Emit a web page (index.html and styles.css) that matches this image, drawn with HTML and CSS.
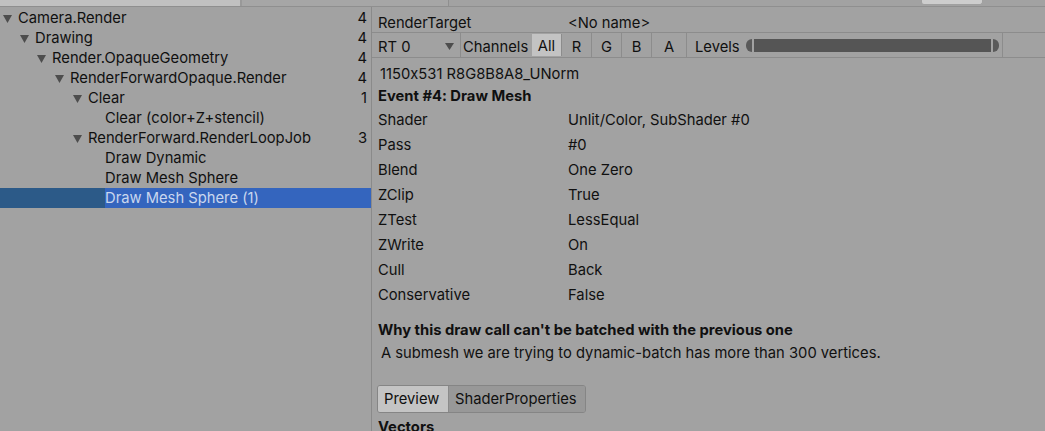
FILE: index.html
```html
<!DOCTYPE html>
<html>
<head>
<meta charset="utf-8">
<link rel="stylesheet" href="styles.css">
</head>
<body>
<div class="topstrip">
  <div class="ts-tab ts-active"></div>
  <div class="ts-tab ts-second"></div>
  <div class="ts-fill"><div class="ts-btn"></div></div>
</div>
<div class="main">
  <div class="tree">
    <div class="row lvl0"><span class="arrow"><svg width="9" height="8" viewBox="0 0 9 8"><polygon points="0,0 9,0 4.5,8" /></svg></span><span class="label">Camera.Render</span><span class="count">4</span></div>
    <div class="row lvl1"><span class="arrow"><svg width="9" height="8" viewBox="0 0 9 8"><polygon points="0,0 9,0 4.5,8" /></svg></span><span class="label">Drawing</span><span class="count">4</span></div>
    <div class="row lvl2"><span class="arrow"><svg width="9" height="8" viewBox="0 0 9 8"><polygon points="0,0 9,0 4.5,8" /></svg></span><span class="label">Render.OpaqueGeometry</span><span class="count">4</span></div>
    <div class="row lvl3"><span class="arrow"><svg width="9" height="8" viewBox="0 0 9 8"><polygon points="0,0 9,0 4.5,8" /></svg></span><span class="label">RenderForwardOpaque.Render</span><span class="count">4</span></div>
    <div class="row lvl4"><span class="arrow"><svg width="9" height="8" viewBox="0 0 9 8"><polygon points="0,0 9,0 4.5,8" /></svg></span><span class="label">Clear</span><span class="count">1</span></div>
    <div class="row lvl5"><span class="arrow"></span><span class="label">Clear (color+Z+stencil)</span></div>
    <div class="row lvl4"><span class="arrow"><svg width="9" height="8" viewBox="0 0 9 8"><polygon points="0,0 9,0 4.5,8" /></svg></span><span class="label">RenderForward.RenderLoopJob</span><span class="count">3</span></div>
    <div class="row lvl5"><span class="arrow"></span><span class="label">Draw Dynamic</span></div>
    <div class="row lvl5"><span class="arrow"></span><span class="label">Draw Mesh Sphere</span></div>
    <div class="row lvl5 selected"><span class="arrow"></span><span class="label">Draw Mesh Sphere (1)</span></div>
  </div>
  <div class="inspector">
    <div class="rt-row">
      <span class="rt-label">RenderTarget</span>
      <span class="rt-value">&lt;No name&gt;</span>
    </div>
    <div class="toolbar">
      <div class="tb-item tb-popup"><span>RT 0</span><svg width="9" height="7" viewBox="0 0 9 7"><polygon points="0,0 9,0 4.5,7" /></svg></div>
      <div class="tb-item tb-label">Channels</div>
      <div class="tb-item tb-btn tb-on">All</div>
      <div class="tb-item tb-btn">R</div>
      <div class="tb-item tb-btn">G</div>
      <div class="tb-item tb-btn">B</div>
      <div class="tb-item tb-btn tb-a">A</div>
      <div class="tb-item tb-levels">
        <span>Levels</span>
        <div class="slider"><span class="knob knob-l"></span><span class="bar"></span><span class="knob knob-r"></span></div>
      </div>
      <div class="tb-rest"></div>
    </div>
    <div class="details">
      <div class="line fmt">1150x531 R8G8B8A8_UNorm</div>
      <div class="line bold event">Event #4: Draw Mesh</div>
      <div class="props">
        <div class="prop"><span class="pk">Shader</span><span class="pv">Unlit/Color, SubShader #0</span></div>
        <div class="prop"><span class="pk">Pass</span><span class="pv">#0</span></div>
        <div class="prop"><span class="pk">Blend</span><span class="pv">One Zero</span></div>
        <div class="prop"><span class="pk">ZClip</span><span class="pv">True</span></div>
        <div class="prop"><span class="pk">ZTest</span><span class="pv">LessEqual</span></div>
        <div class="prop"><span class="pk">ZWrite</span><span class="pv">On</span></div>
        <div class="prop"><span class="pk">Cull</span><span class="pv">Back</span></div>
        <div class="prop"><span class="pk">Conservative</span><span class="pv">False</span></div>
      </div>
      <div class="line bold why">Why this draw call can't be batched with the previous one</div>
      <div class="line reason">A submesh we are trying to dynamic-batch has more than 300 vertices.</div>
      <div class="tabs">
        <div class="tab tab-on">Preview</div>
        <div class="tab tab-off">ShaderProperties</div>
      </div>
      <div class="line bold vectors">Vectors</div>
    </div>
  </div>
</div>
</body>
</html>
```

FILE: styles.css
```css
html, body {
  margin: 0;
  padding: 0;
  height: 100%;
  overflow: hidden;
}
body {
  background: #a2a2a2;
  color: #101010;
  font-family: Inter, "Noto Sans", sans-serif;
  font-size: 14.75px;
  line-height: 20px;
  font-feature-settings: "calt" 0;
}
.topstrip {
  height: 6px;
  display: flex;
  border-bottom: 1px solid #8f8f8f;
}
.ts-tab {
  height: 6px;
}
.ts-active {
  width: 240px;
  background: #c1c1c1;
  border-right: 2px solid #999;
}
.ts-second {
  width: 206px;
  background: #a6a6a6;
  border-right: 1px solid #8f8f8f;
}
.ts-fill {
  flex: 1;
  display: flex;
  justify-content: flex-end;
}
.ts-btn {
  width: 60px;
  height: 4px;
  background: #cdcdcd;
  border-radius: 0 0 3px 3px;
  border: 1px solid #a0a0a0;
  border-top: none;
  margin-right: 62px;
}
.main {
  display: flex;
  height: calc(100% - 7px);
}
.tree {
  width: 372px;
  flex: none;
  border-right: 1px solid #8a8a8a;
  padding-top: 1px;
  box-sizing: border-box;
}
.row {
  display: flex;
  height: 20px;
  align-items: center;
  padding-right: 4px;
}
.arrow {
  width: 15px;
  flex: none;
  display: flex;
  align-items: center;
}
.arrow svg {
  fill: #4d4d4d;
  margin-top: 1px;
}
.label {
  flex: 1;
  white-space: nowrap;
}
.count {
  flex: none;
}
.lvl0 { padding-left: 3px; }
.lvl1 { padding-left: 20px; }
.lvl2 { padding-left: 37px; }
.lvl3 { padding-left: 55px; }
.lvl4 { padding-left: 73px; }
.lvl5 { padding-left: 90px; }
.selected {
  background: #2c5a88;
  padding-right: 0;
}
.selected .label {
  background: #3465be;
  color: #c9d7ee;
  align-self: stretch;
  line-height: 20px;
}
.inspector {
  flex: 1;
  display: flex;
  flex-direction: column;
  min-width: 0;
}
.rt-row {
  height: 26px;
  border-bottom: 1px solid #8c8c8c;
  display: flex;
  padding-left: 6px;
  padding-top: 6px;
  box-sizing: border-box;
}
.rt-label {
  width: 190px;
}
.toolbar {
  height: 27px;
  border-bottom: 1px solid #8c8c8c;
  display: flex;
  box-sizing: border-box;
}
.tb-item {
  display: flex;
  align-items: center;
  border-right: 1px solid #8c8c8c;
  box-sizing: border-box;
  padding-top: 4px;
}
.tb-popup {
  width: 89px;
  padding-left: 6px;
  padding-right: 6px;
  justify-content: space-between;
}
.tb-popup svg {
  fill: #4d4d4d;
  margin-top: -2px;
}
.tb-label {
  width: 71px;
  padding-left: 2px;
  border-right: none;
}
.tb-btn {
  width: 30px;
  justify-content: center;
}
.tb-on {
  background: #c3c3c3;
  border-right: 1px solid #8c8c8c;
  margin: 1px 0;
  padding-top: 2px;
}
.tb-a {
  width: 35px;
}
.tb-levels {
  width: 316px;
  padding-left: 8px;
  padding-right: 3px;
}
.slider {
  display: flex;
  align-items: center;
  flex: 1;
  margin-left: 6px;
  margin-top: -4px;
  height: 13px;
}
.knob {
  width: 6px;
  height: 13px;
  background: #5a5a5a;
  flex: none;
}
.knob-l {
  border-radius: 6px 0 0 6px;
  margin-right: 2px;
}
.knob-r {
  border-radius: 0 6px 6px 0;
  margin-left: 2px;
}
.bar {
  flex: 1;
  height: 13px;
  background: #555;
}
.tb-rest {
  flex: 1;
}
.details {
  padding-left: 6px;
}
.line {
  white-space: nowrap;
}
.fmt {
  margin-top: 6px;
  padding-left: 2px;
}
.bold {
  font-weight: 700;
}
.event {
  margin-top: 2px;
}
.props {
  margin-top: 1px;
}
.prop {
  display: flex;
  height: 25px;
  align-items: center;
}
.pk {
  width: 190px;
  flex: none;
}
.why {
  margin-top: 13px;
}
.reason {
  margin-top: 3px;
  padding-left: 3px;
}
.tabs {
  display: inline-flex;
  margin-top: 22px;
  margin-left: -1px;
  border: 1px solid #858585;
  border-radius: 3px;
  height: 28px;
  box-sizing: border-box;
  overflow: hidden;
}
.tab {
  display: flex;
  align-items: center;
  padding: 0 6px;
  box-sizing: border-box;
}
.tab-on {
  background: #c4c4c4;
  width: 70px;
}
.tab-off {
  background: #989898;
  border-left: 1px solid #8a8a8a;
  width: 137px;
}
.vectors {
  margin-top: 4px;
}
```
